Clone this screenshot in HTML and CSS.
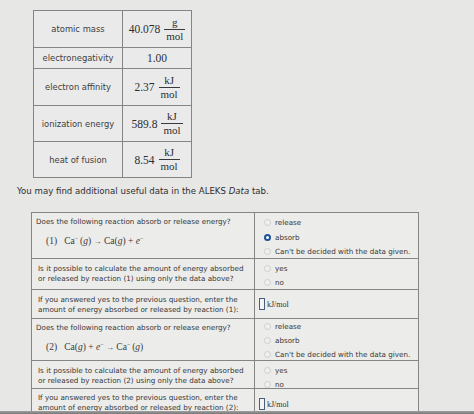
FILE: index.html
```html
<!DOCTYPE html>
<html>
<head>
<meta charset="utf-8">
<link rel="stylesheet" href="styles.css">
</head>
<body>
<div class="page">
  <div class="data">
    <div class="drow r1"><div class="lab">atomic mass</div><div class="val"><span class="num">40.078</span><span class="frac"><span class="top">g</span><span class="bot">mol</span></span></div></div>
    <div class="drow r2"><div class="lab">electronegativity</div><div class="val"><span class="num">1.00</span></div></div>
    <div class="drow r3"><div class="lab">electron affinity</div><div class="val"><span class="num">2.37</span><span class="frac"><span class="top">kJ</span><span class="bot">mol</span></span></div></div>
    <div class="drow r4"><div class="lab">ionization energy</div><div class="val"><span class="num">589.8</span><span class="frac"><span class="top">kJ</span><span class="bot">mol</span></span></div></div>
    <div class="drow r5"><div class="lab">heat of fusion</div><div class="val"><span class="num">8.54</span><span class="frac"><span class="top">kJ</span><span class="bot">mol</span></span></div></div>
  </div>

  <p class="note">You may find additional useful data in the ALEKS <i>Data</i> tab.</p>

  <div class="qtable">
    <div class="qrow h46">
      <div class="ql">
        <div class="qt">Does the following reaction absorb or release energy?</div>
        <div class="eq">(1)&nbsp;&nbsp; Ca<sup>−</sup>&thinsp;(<i>g</i>) <span class="arr">→</span> Ca(<i>g</i>) + <i>e</i><sup>−</sup></div>
      </div>
      <div class="qr opts3">
        <div class="opt"><span class="rad"></span>release</div>
        <div class="opt"><span class="rad on"></span>absorb</div>
        <div class="opt"><span class="rad"></span>Can't be decided with the data given.</div>
      </div>
    </div>
    <div class="qrow h31">
      <div class="ql two">Is it possible to calculate the amount of energy absorbed<br>or released by reaction (1) using only the data above?</div>
      <div class="qr opts2">
        <div class="opt"><span class="rad"></span>yes</div>
        <div class="opt"><span class="rad"></span>no</div>
      </div>
    </div>
    <div class="qrow h29">
      <div class="ql two">If you answered yes to the previous question, enter the<br>amount of energy absorbed or released by reaction (1):</div>
      <div class="qr inp"><span class="box"></span><span class="unit">kJ/mol</span></div>
    </div>
    <div class="qrow h42">
      <div class="ql">
        <div class="qt">Does the following reaction absorb or release energy?</div>
        <div class="eq">(2)&nbsp;&nbsp; Ca(<i>g</i>) + <i>e</i><sup>−</sup> <span class="arr">→</span> Ca<sup>−</sup>&thinsp;(<i>g</i>)</div>
      </div>
      <div class="qr opts3">
        <div class="opt"><span class="rad"></span>release</div>
        <div class="opt"><span class="rad"></span>absorb</div>
        <div class="opt"><span class="rad"></span>Can't be decided with the data given.</div>
      </div>
    </div>
    <div class="qrow h28">
      <div class="ql two">Is it possible to calculate the amount of energy absorbed<br>or released by reaction (2) using only the data above?</div>
      <div class="qr opts2">
        <div class="opt"><span class="rad"></span>yes</div>
        <div class="opt"><span class="rad"></span>no</div>
      </div>
    </div>
    <div class="qrow h30 last">
      <div class="ql two">If you answered yes to the previous question, enter the<br>amount of energy absorbed or released by reaction (2):</div>
      <div class="qr inp"><span class="box"></span><span class="unit">kJ/mol</span></div>
    </div>
  </div>
  <div class="edge"></div>
</div>
</body>
</html>
```
FILE: styles.css
```css
* { box-sizing: border-box; }
html, body { margin: 0; padding: 0; }
body {
  width: 474px;
  height: 414px;
  overflow: hidden;
  background: #e7e7e6;
  font-family: "DejaVu Sans", Verdana, sans-serif;
  color: #333;
}
.page {
  position: relative;
  width: 474px;
  height: 414px;
  padding-top: 10px;
}
.data {
  margin-left: 33px;
  width: 159px;
  border: 1px solid #858585;
  background: #eaeaea;
}
.drow {
  display: flex;
  border-bottom: 1px solid #858585;
}
.drow:last-child { border-bottom: none; }
.r1 { height: 37px; }
.r2 { height: 21px; }
.r3 { height: 37px; }
.r4 { height: 36px; }
.r5 { height: 35px; }
.lab {
  width: 89px;
  border-right: 1px solid #858585;
  display: flex;
  align-items: center;
  justify-content: center;
  font-size: 8.4px;
  color: #3d3d3d;
}
.val {
  flex: 1;
  display: flex;
  align-items: center;
  justify-content: center;
  gap: 4px;
  font-family: "Liberation Serif", "Times New Roman", serif;
  color: #2e2e2e;
}
.num { font-size: 11.5px; }
.frac {
  display: inline-flex;
  flex-direction: column;
  align-items: center;
  font-size: 11px;
  line-height: 11px;
}
.frac .top {
  border-bottom: 1px solid #3a3a3a;
  padding: 0 2px 1px;
  align-self: stretch;
  text-align: center;
}
.frac .bot { padding: 1px 2px 0; }

.note {
  margin: 8px 0 0 17px;
  font-size: 8.6px;
  color: #2e2e2e;
  line-height: 10px;
}

.qtable {
  margin: 16px 0 0 31px;
  width: 388px;
  border: 1px solid #858585;
  border-bottom: none;
  background: #ececeb;
  font-size: 7.2px;
  color: #363636;
}
.qrow {
  display: flex;
  border-bottom: 1px solid #858585;
}
.qrow.last { border-bottom: none; }
.h46 { height: 46px; }
.h31 { height: 31px; }
.h29 { height: 29px; }
.h42 { height: 42px; }
.h28 { height: 28px; }
.h30 { height: 30px; }
.ql {
  width: 223px;
  border-right: 1px solid #858585;
  padding: 4px 0 0 4px;
}
.ql.two {
  padding: 5px 0 0 6px;
  line-height: 9.5px;
}
.h30 .ql.two { padding-top: 4px; }
.qt { line-height: 9px; }
.eq {
  margin: 9px 0 0 10px;
  font-family: "Liberation Serif", "Times New Roman", serif;
  font-size: 9.5px;
  color: #3a3a3a;
}
.eq sup { font-size: 6px; vertical-align: 4px; }
.eq .arr { font-size: 8px; }
.qr {
  flex: 1;
  padding-left: 9px;
  display: flex;
  flex-direction: column;
}
.opts3 { padding-top: 5px; gap: 5.5px; }
.opts2 { padding-top: 5px; gap: 4.5px; }
.h42 .opts3 { padding-top: 3px; gap: 5px; }
.opt {
  display: flex;
  align-items: center;
  height: 9px;
  gap: 4px;
}
.rad {
  width: 7px;
  height: 7px;
  border-radius: 50%;
  border: 1px solid #cfcfcf;
  background: #efefef;
  flex: none;
}
.rad.on {
  border: 2px solid #1c4f9c;
  background: #fff;
}
.inp {
  flex-direction: row;
  align-items: center;
  padding-left: 4px;
  gap: 2px;
}
.box {
  width: 6px;
  height: 12px;
  border: 1px solid #4a5c80;
  background: #f4f4f4;
}
.unit {
  font-family: "Liberation Serif", "Times New Roman", serif;
  font-size: 8px;
  color: #333;
}
.edge {
  position: absolute;
  left: 0;
  right: 0;
  bottom: 0;
  height: 3px;
  background: linear-gradient(#a0a0a0, #777);
}
```
